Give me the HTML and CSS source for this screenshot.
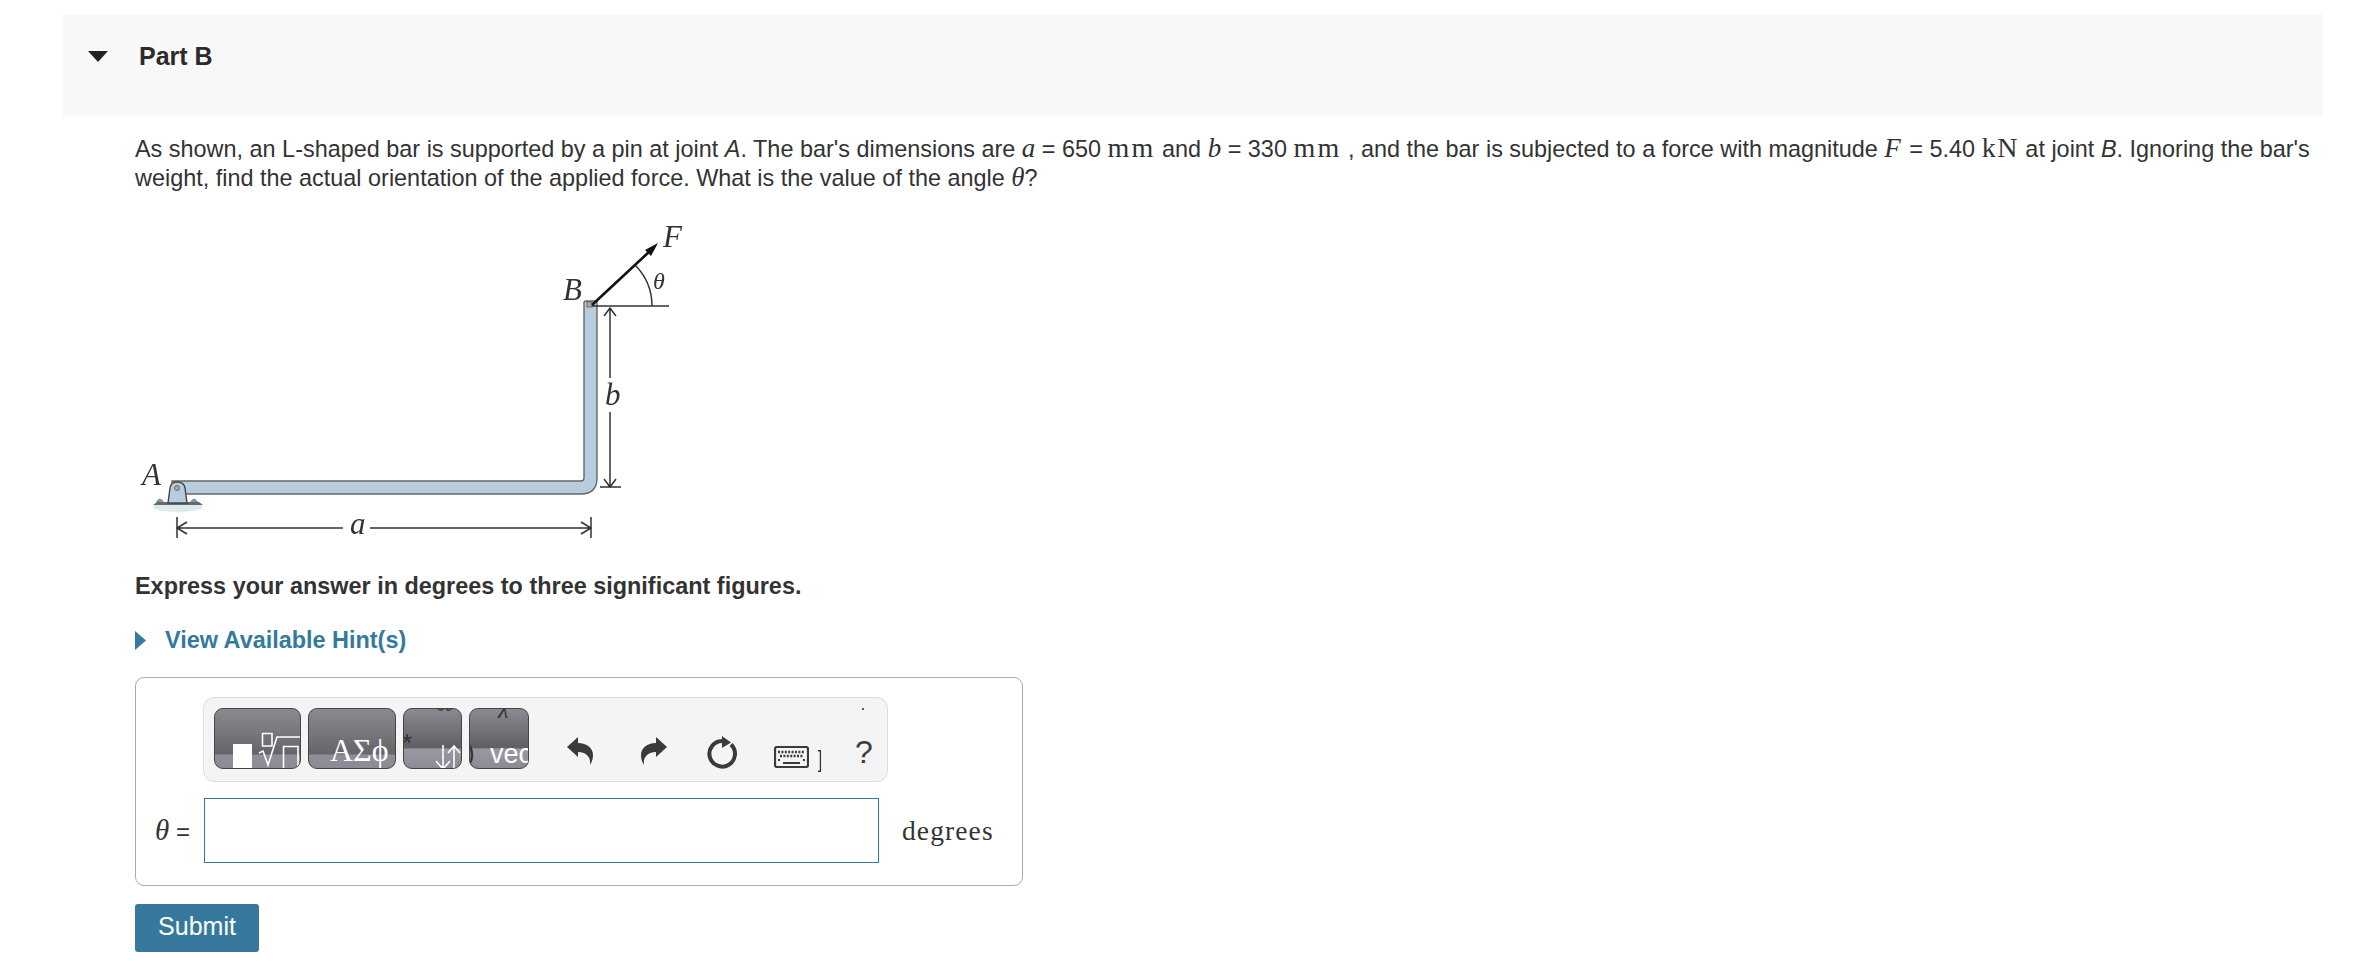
FILE: index.html
```html
<!DOCTYPE html>
<html lang="en">
<head>
<meta charset="utf-8">
<title>Part B</title>
<link rel="stylesheet" href="styles.css">
</head>
<body>
<header class="part-header">
  <svg class="part-caret" width="20" height="11" viewBox="0 0 20 11"><path d="M0 0H20L10 11Z"/></svg>
  <h2 class="part-title">Part B</h2>
</header>
<main class="part-body">
  <p class="prompt">As shown, an L-shaped bar is supported by a pin at joint <i>A</i>. The bar's dimensions are <span class="m"><i>a</i></span> = 650 <span class="m mu">mm</span> and <span class="m"><i>b</i></span> = 330 <span class="m mu">mm</span> , and the bar is subjected to a force with magnitude <span class="m mf"><i>F</i></span> = 5.40 <span class="m mk">kN</span> at joint <i>B</i>. Ignoring the bar's<br>weight, find the actual orientation of the applied force. What is the value of the angle <span class="m"><i>θ</i></span>?</p>

  <svg class="diagram" width="560" height="330" viewBox="135 220 560 330">
    <ellipse class="d-shadow" cx="178" cy="507" rx="25" ry="5"/>
    <path class="d-bar" d="M172 481H581Q584 481 584 478V303Q584 301 586 301H595Q597 301 597 303V478Q597 494 581 494H172Z"/>
    <path class="d-base" d="M153 505L157 502H199L203 505Z"/>
    <path class="d-bolt" d="M156 502Q160 495 164 502ZM190 502Q194 495 198 502Z"/>
    <path class="d-support" d="M168 503L170 488Q171 482 177 482Q184 482 185 488L187 503Z"/>
    <circle class="d-pin" cx="177" cy="488" r="2.5"/>
    <rect class="d-pin" x="587" y="302" width="5" height="5"/>
    <path class="d-line" d="M592 306H669M635 265Q652 282 652 306"/>
    <path class="d-force" d="M592 305L650 251"/>
    <path class="d-head" d="M658 243L645 250L651 256Z"/>
    <path class="d-line" d="M610 308V378M610 412V487M600 487H621M604 316L610 308L616 316M604 479L610 487L616 479"/>
    <path class="d-line" d="M177 517V538M591 517V538M177 528H343M370 528H591M187 522L177 528L187 534M581 522L591 528L581 534"/>
    <text class="d-label" x="142" y="485">A</text>
    <text class="d-label" x="563" y="300">B</text>
    <text class="d-label" x="663" y="247">F</text>
    <text class="d-small" x="653" y="289">θ</text>
    <text class="d-label" x="605" y="405">b</text>
    <text class="d-label" x="350" y="534">a</text>
  </svg>

  <p class="instruction">Express your answer in degrees to three significant figures.</p>

  <div class="hint-toggle">
    <svg class="hint-caret" width="11" height="19" viewBox="0 0 11 19"><path d="M0 0L11 9.500L0 19Z"/></svg>
    <span>View Available Hint(s)</span>
  </div>

  <section class="answer-box">
    <div class="toolbar">
      <div class="tool tool-a">
        <svg width="87" height="61" viewBox="0 0 87 61">
          <rect class="w-fill" x="19" y="36" width="19" height="26"/>
          <path class="w-line" d="M48.500 25.500H58V38H48.500ZM45 45L49 43L54 57L63 29H87M69.500 61V38.500H84V61"/>
        </svg>
      </div>
      <div class="tool tool-b">
        <svg width="88" height="61" viewBox="0 0 88 61"><text class="w-serif" x="22" y="53">ΑΣϕ</text></svg>
      </div>
      <div class="tool tool-c">
        <svg width="59" height="61" viewBox="0 0 59 61">
          <text class="d-glyph" x="-1" y="44">*</text>
          <text class="d-glyph-top" x="33" y="5">∞</text>
          <path class="w-line" d="M40 37V61M33 53L40 61L47 53M51 61V38M45 45L51 38L57 45"/>
        </svg>
      </div>
      <div class="tool tool-d">
        <svg width="60" height="61" viewBox="0 0 60 61">
          <text class="d-glyph" x="-3" y="54">)</text>
          <text class="d-glyph-top" x="29" y="10">λ</text>
          <text class="w-sans" x="21" y="55">vec</text>
        </svg>
      </div>
      <svg class="ic ic-undo" width="26" height="28" viewBox="0 0 26 28"><path d="M0 10L11 0V6C20 6 26 11 26 18C26 22 25 25 23 28C24 22 21 15 11 15V20Z"/></svg>
      <svg class="ic ic-redo" width="26" height="28" viewBox="0 0 26 28"><path d="M26 10L15 0V6C6 6 0 11 0 18C0 22 1 25 3 28C2 22 5 15 15 15V20Z"/></svg>
      <svg class="ic ic-reset" width="30" height="34" viewBox="0 0 30 34">
        <path class="ic-stroke" d="M24 8.500A12.800 12.800 0 1 1 15 5"/>
        <path d="M15 0L24 6.500L15 12Z"/>
      </svg>
      <svg class="ic ic-keys" width="35" height="22" viewBox="0 0 35 22">
        <rect class="ic-keybox" x="1" y="1" width="33" height="20" rx="2"/>
        <path class="ic-dots" d="M4 6H31M6 10H29"/>
        <path class="ic-space" d="M4 14H6M29 14H31M9 17H26"/>
      </svg>
      <span class="bracket">]</span>
      <span class="help">?</span>
      <i class="speck"></i>
    </div>
    <div class="answer-row">
      <span class="answer-label"><i>θ</i> =</span>
      <div class="answer-input"></div>
      <span class="unit">degrees</span>
    </div>
  </section>

  <button class="submit" type="button">Submit</button>
</main>
</body>
</html>
```

FILE: styles.css
```css
* { box-sizing: border-box; }
html, body { margin: 0; background: #fff; }
body {
  padding: 14px 47px 0 63px;
  font-family: "Liberation Sans", Arial, sans-serif;
  font-size: 23.430px;
  line-height: 29px;
  color: #333;
  height: 961px;
  overflow: hidden;
}
.part-header {
  height: 102px;
  background: #f8f8f8;
  display: flex;
  align-items: flex-start;
  padding: 28px 0 0 25px;
}
.part-caret { margin: 9px 31px 0 0; fill: #222; }
.part-title { margin: 0; font-size: 25px; line-height: 29px; font-weight: 700; color: #2b2b2b; }
.part-body { padding-left: 72px; }
.prompt { margin: 19px 0 0; white-space: nowrap; }
.m { font-family: "Liberation Serif", serif; font-size: 27px; line-height: 20px; }
.mu { font-size: 28px; letter-spacing: 2.200px; }
.mf { letter-spacing: 2px; }
.mk { font-size: 28px; letter-spacing: 1.500px; }
.diagram { display: block; margin-top: 27px; filter: blur(.35px); }
.d-shadow { fill: #dfeae6; }
.d-bar { fill: #b7cddd; stroke: #666; stroke-width: 1.400; }
.d-base { fill: #5e6a75; }
.d-bolt { fill: #8a949c; }
.d-support { fill: #b7cddd; stroke: #444; stroke-width: 1.400; }
.d-pin { fill: #aaa; stroke: #555; stroke-width: .8; }
.d-line { fill: none; stroke: #333; stroke-width: 1.500; }
.d-force { stroke: #111; stroke-width: 2.600; }
.d-head { fill: #111; }
.d-label { font: italic 31px "Liberation Serif", serif; fill: #333; }
.d-small { font: italic 24px "Liberation Serif", serif; fill: #333; }
.instruction { margin: 22px 0 0; font-weight: 700; }
.hint-toggle {
  margin-top: 25px;
  display: flex;
  align-items: center;
  gap: 19px;
  color: #337a9c;
  font-weight: 700;
}
.hint-caret { fill: #337a9c; }
.answer-box {
  margin-top: 22px;
  width: 888px;
  height: 209px;
  border: 1px solid #aaa;
  border-radius: 9px;
  padding: 19px 0 0 67px;
}
.toolbar {
  position: relative;
  width: 685px;
  height: 85px;
  background: #f4f4f4;
  border: 1px solid #ddd;
  border-radius: 11px;
  display: flex;
  align-items: flex-start;
  padding: 10px 0 0 10px;
}
.tool {
  height: 61px;
  border: 1px solid #444;
  border-radius: 9px;
  overflow: hidden;
  margin-right: 7px;
  flex: none;
}
.tool svg { display: block; margin: -1px; }
.tool-a, .tool-b {
  background: linear-gradient(#8b8a90 0, #66666a 44px, #66666a 45px, #908e98 46px, #8c8a94 100%);
}
.tool-c, .tool-d {
  background: linear-gradient(#8b8a90 0, #606064 38px, #66666a 39px, #9a98a2 40px, #8c8a94 100%);
}
.tool-a { width: 87px; }
.tool-b { width: 88px; }
.tool-c { width: 59px; }
.tool-d { width: 60px; margin-right: 0; }
.w-fill { fill: #fff; }
.w-line { fill: none; stroke: #fff; stroke-width: 1.600; }
.w-serif { font: 32px "Liberation Serif", serif; fill: #fff; }
.w-sans { font: 27px "Liberation Sans", sans-serif; fill: #fff; }
.d-glyph { font: 26px "Liberation Sans", sans-serif; fill: #333; }
.d-glyph-top { font: italic 24px "Liberation Serif", serif; fill: #333; }
.ic { flex: none; fill: #3a3a3a; }
.ic-undo { margin: 29px 0 0 38px; }
.ic-redo { margin: 29px 0 0 48px; }
.ic-reset { margin: 28px 0 0 40px; }
.ic-keys { margin: 38px 0 0 37px; }
.ic-stroke { fill: none; stroke: #3a3a3a; stroke-width: 4; }
.ic-keybox { fill: #f4f4f4; stroke: #3a3a3a; stroke-width: 2.200; }
.ic-dots { fill: none; stroke: #3a3a3a; stroke-width: 2.400; stroke-dasharray: 2 1.400; }
.ic-space { fill: none; stroke: #3a3a3a; stroke-width: 2; }
.bracket { width: 5px; overflow: hidden; margin: 36px 0 0 8px; font-size: 24px; line-height: 29px; color: #333; transform: scaleX(.7); }
.help { margin: 26px 0 0 33px; font-size: 32px; line-height: 36px; color: #3a3a3a; }
.speck { position: absolute; left: 658px; top: 10px; width: 2px; height: 2px; background: #555; }
.answer-row { display: flex; align-items: center; margin: 16px 0 0 -67px; height: 65px; }
.answer-label {
  width: 68px;
  padding-left: 19px;
  font-family: "Liberation Sans", sans-serif;
  font-size: 24px;
  white-space: nowrap;
}
.answer-label i { font-family: "Liberation Serif", serif; font-size: 29px; }
.answer-input { width: 675px; height: 65px; border: 1px solid #337a9c; background: #fff; flex: none; }
.unit { margin-left: 23px; font: 27.500px "Liberation Serif", serif; letter-spacing: 1.100px; color: #333; }
.submit {
  display: block;
  margin-top: 18px;
  width: 124px;
  height: 48px;
  border: 0;
  border-radius: 3px;
  background: #36799c;
  color: #fff;
  font: 25px/44px "Liberation Sans", Arial, sans-serif;
  padding: 0 0 4px;
}
```
